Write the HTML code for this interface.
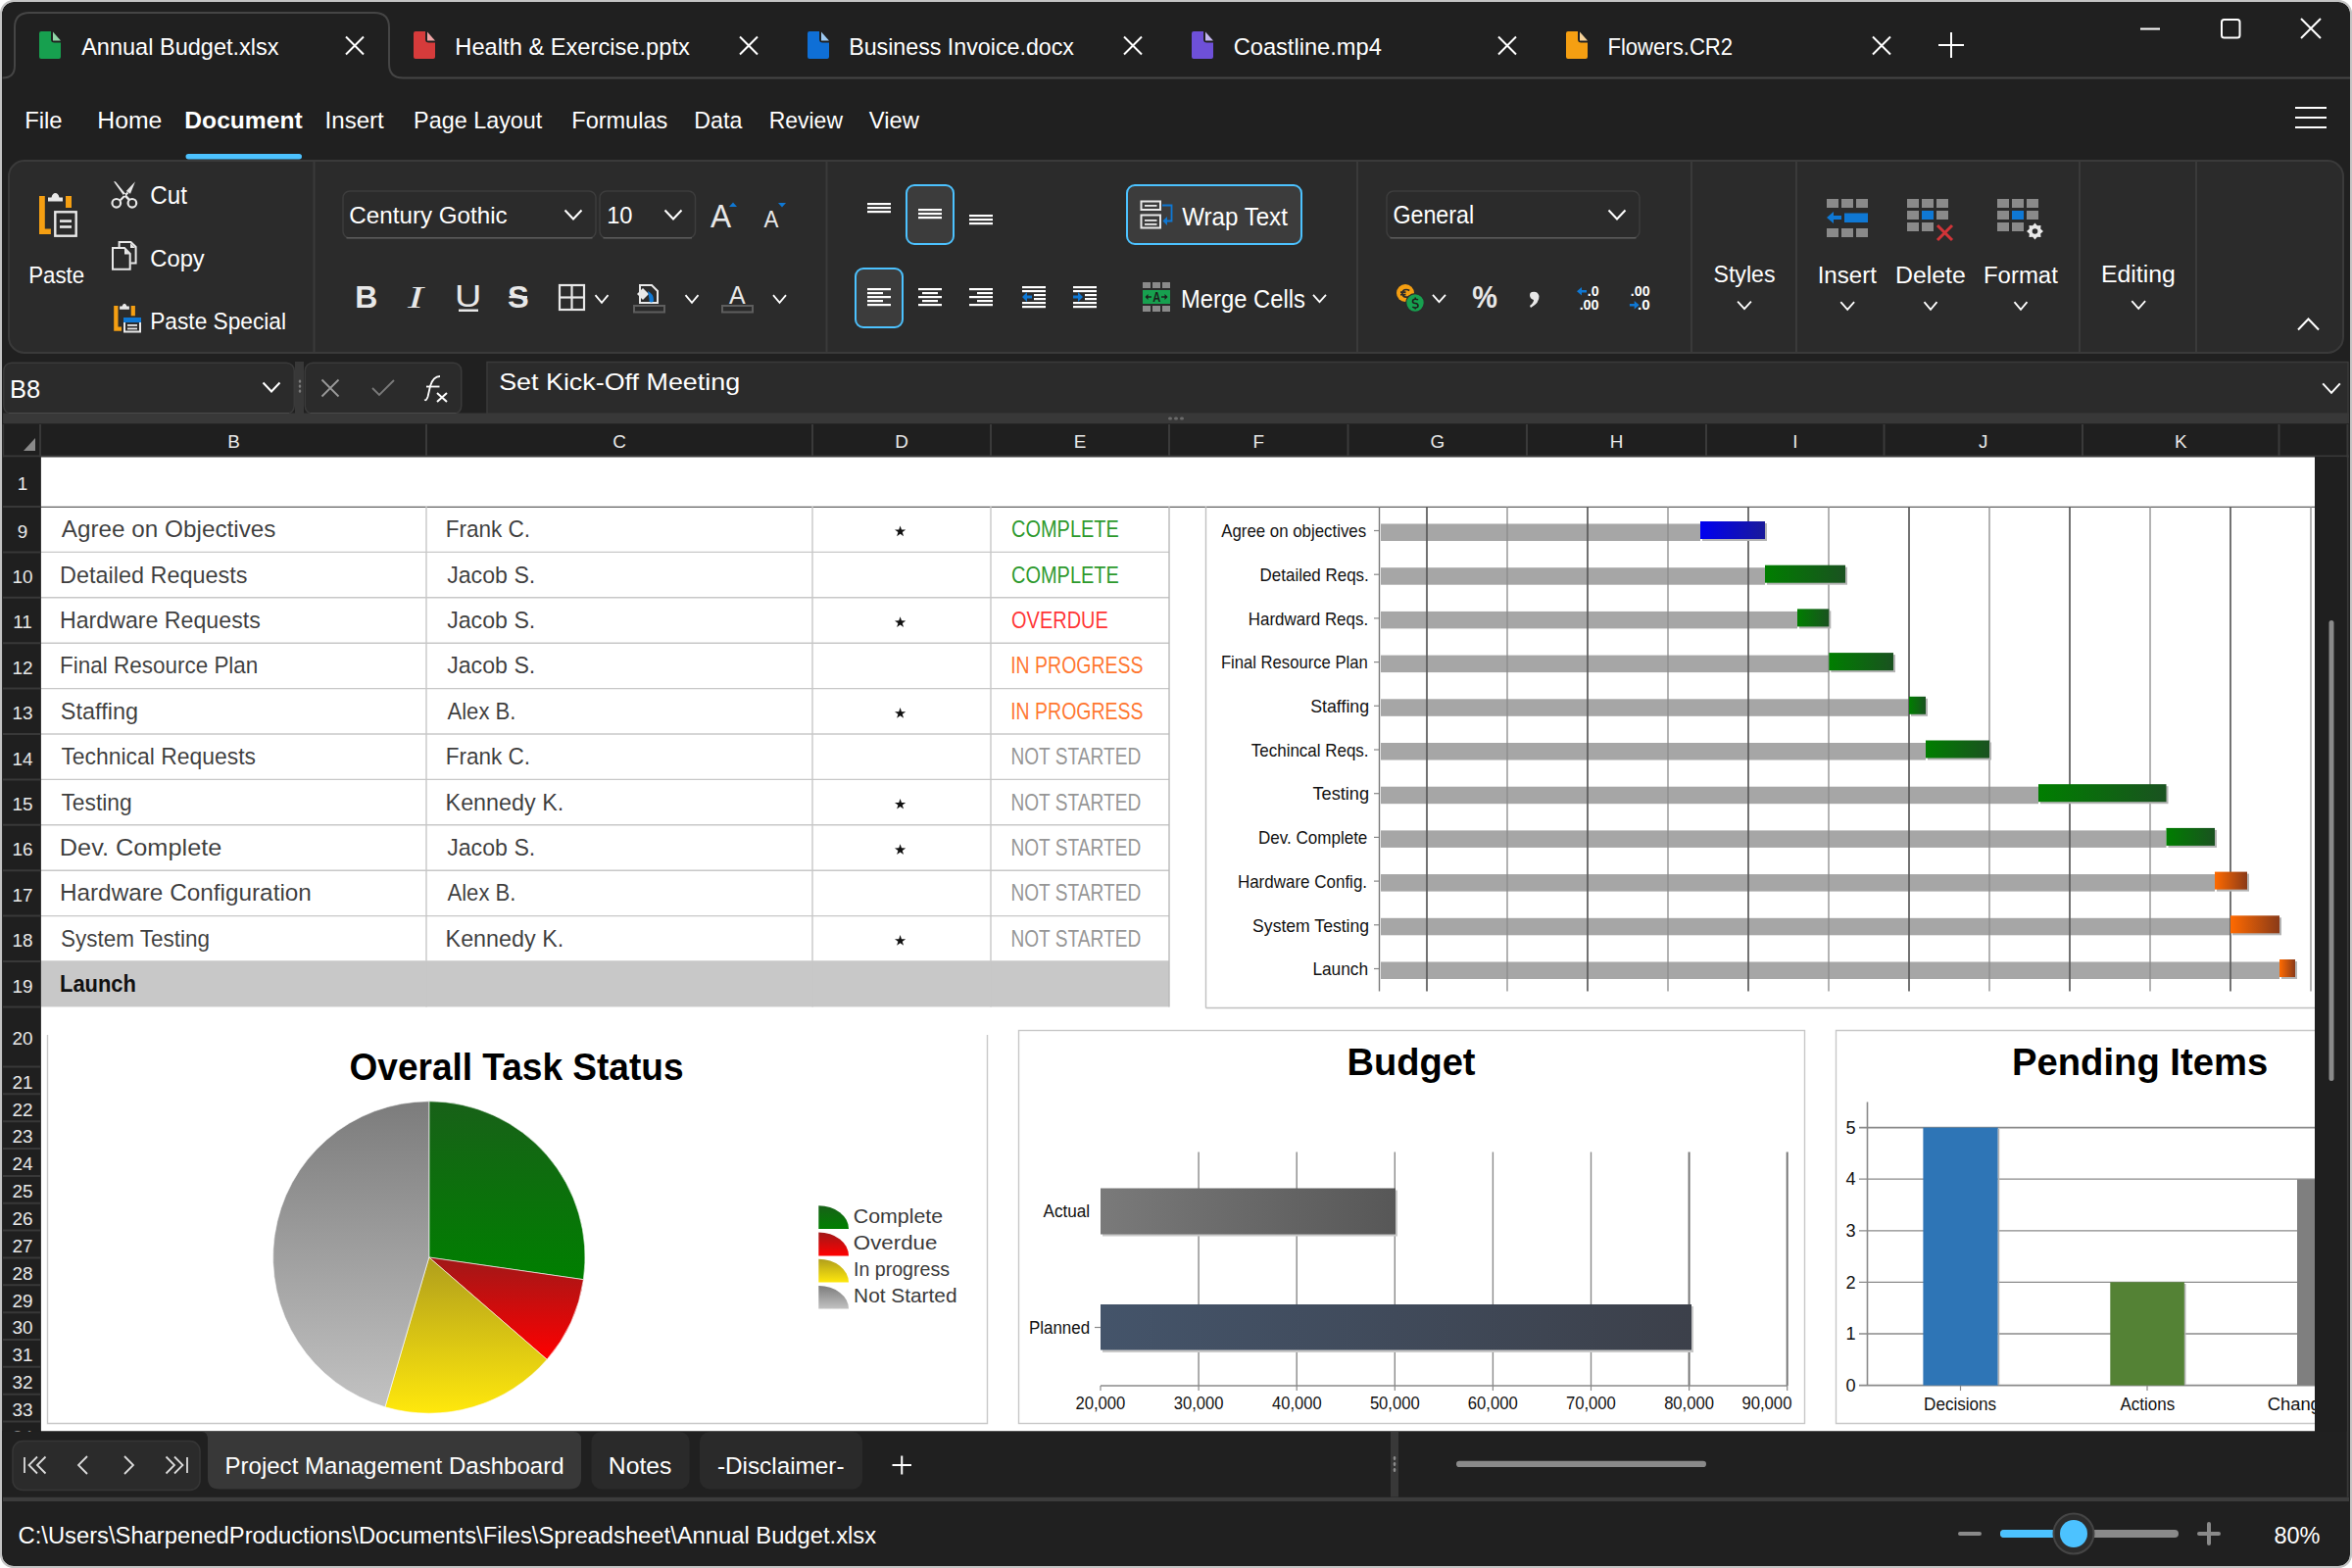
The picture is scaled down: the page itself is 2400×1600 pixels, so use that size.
<!DOCTYPE html>
<html><head><meta charset="utf-8"><style>
html,body{margin:0;padding:0;background:#fff;overflow:hidden}
svg{display:block;font-family:"Liberation Sans",sans-serif}
</style></head><body>
<svg width="2400" height="1600" viewBox="0 0 2400 1600">
<defs>
<linearGradient id="gblue" x1="0" x2="1" y1="0" y2="0"><stop offset="0" stop-color="#0000f0"/><stop offset="1" stop-color="#1a1a9a"/></linearGradient>
<linearGradient id="ggreen" x1="0" x2="1" y1="0" y2="0"><stop offset="0" stop-color="#007e00"/><stop offset="1" stop-color="#1a5220"/></linearGradient>
<linearGradient id="gorange" x1="0" x2="1" y1="0" y2="0"><stop offset="0" stop-color="#ff6a00"/><stop offset="1" stop-color="#8a3a18"/></linearGradient>
<linearGradient id="pg" x1="0" x2="0" y1="0" y2="1"><stop offset="0" stop-color="#186118"/><stop offset="1" stop-color="#007f00"/></linearGradient>
<linearGradient id="pr" x1="0" x2="0" y1="0" y2="1"><stop offset="0" stop-color="#a01818"/><stop offset="1" stop-color="#ff0000"/></linearGradient>
<linearGradient id="py" x1="0" x2="0" y1="0" y2="1"><stop offset="0" stop-color="#b09e1c"/><stop offset="1" stop-color="#ffe80c"/></linearGradient>
<linearGradient id="pgr" x1="0" x2="0" y1="0" y2="1"><stop offset="0" stop-color="#7c7c7c"/><stop offset="1" stop-color="#c2c2c2"/></linearGradient>
<linearGradient id="bact" x1="0" x2="1" y1="0" y2="0"><stop offset="0" stop-color="#7a7a7a"/><stop offset="1" stop-color="#575757"/></linearGradient>
<linearGradient id="bpl" x1="0" x2="1" y1="0" y2="0"><stop offset="0" stop-color="#44546a"/><stop offset="1" stop-color="#3c404a"/></linearGradient>
</defs>
<rect x="0.00" y="0.00" width="2400.00" height="1600.00" fill="#ffffff"/>
<rect x="1" y="1" width="2398" height="1598" rx="13" fill="#202020" stroke="#c4c4c4" stroke-width="2"/>
<path d="M2.5,79.5 Q15,79.5 15,67 L15,28 Q15,13 30,13 L382,13 Q397,13 397,28 L397,65 Q397,79.5 411,79.5 L2398,79.5" fill="none" stroke="#454545" stroke-width="2"/>
<path d="M42,32 L52,32 L52,40 Q52,43.5 55.5,43.5 L62,43.5 L62,58 Q62,60 60,60 L42,60 Q40,60 40,58 L40,34 Q40,32 42,32 Z" fill="#17a04f"/>
<path d="M54,32.5 L62,41.5 L54,41.5 Z" fill="#92d6a8"/>
<text x="83.15" y="55.8" font-size="24.71" fill="#fff" textLength="201.50" lengthAdjust="spacingAndGlyphs">Annual Budget.xlsx</text>
<path d="M353,37.5 L371,55.5 M371,37.5 L353,55.5" fill="none" stroke="#fff" stroke-width="2"/>
<path d="M424,32 L434,32 L434,40 Q434,43.5 437.5,43.5 L444,43.5 L444,58 Q444,60 442,60 L424,60 Q422,60 422,58 L422,34 Q422,32 424,32 Z" fill="#d63b3b"/>
<path d="M436,32.5 L444,41.5 L436,41.5 Z" fill="#eea4a4"/>
<text x="464.36" y="55.8" font-size="24.71" fill="#fff" textLength="239.50" lengthAdjust="spacingAndGlyphs">Health &amp; Exercise.pptx</text>
<path d="M755,37.5 L773,55.5 M773,37.5 L755,55.5" fill="none" stroke="#fff" stroke-width="2"/>
<path d="M826,32 L836,32 L836,40 Q836,43.5 839.5,43.5 L846,43.5 L846,58 Q846,60 844,60 L826,60 Q824,60 824,58 L824,34 Q824,32 826,32 Z" fill="#0f6fd6"/>
<path d="M838,32.5 L846,41.5 L838,41.5 Z" fill="#9dc8f0"/>
<text x="866.20" y="55.8" font-size="24.71" fill="#fff" textLength="229.75" lengthAdjust="spacingAndGlyphs">Business Invoice.docx</text>
<path d="M1147,37.5 L1165,55.5 M1165,37.5 L1147,55.5" fill="none" stroke="#fff" stroke-width="2"/>
<path d="M1218,32 L1228,32 L1228,40 Q1228,43.5 1231.5,43.5 L1238,43.5 L1238,58 Q1238,60 1236,60 L1218,60 Q1216,60 1216,58 L1216,34 Q1216,32 1218,32 Z" fill="#6e50d8"/>
<path d="M1230,32.5 L1238,41.5 L1230,41.5 Z" fill="#c3b6ee"/>
<text x="1258.70" y="55.8" font-size="24.71" fill="#fff" textLength="151.09" lengthAdjust="spacingAndGlyphs">Coastline.mp4</text>
<path d="M1529,37.5 L1547,55.5 M1547,37.5 L1529,55.5" fill="none" stroke="#fff" stroke-width="2"/>
<path d="M1600,32 L1610,32 L1610,40 Q1610,43.5 1613.5,43.5 L1620,43.5 L1620,58 Q1620,60 1618,60 L1600,60 Q1598,60 1598,58 L1598,34 Q1598,32 1600,32 Z" fill="#f59f12"/>
<path d="M1612,32.5 L1620,41.5 L1612,41.5 Z" fill="#f7d39a"/>
<text x="1640.39" y="55.8" font-size="24.71" fill="#fff" textLength="127.72" lengthAdjust="spacingAndGlyphs">Flowers.CR2</text>
<path d="M1911,37.5 L1929,55.5 M1929,37.5 L1911,55.5" fill="none" stroke="#fff" stroke-width="2"/>
<path d="M1978,46 L2004,46 M1991,33 L1991,59" fill="none" stroke="#fff" stroke-width="2"/>
<line x1="2184.00" y1="29.50" x2="2204.00" y2="29.50" stroke="#fff" stroke-width="2"/>
<rect x="2267.00" y="20.00" width="18.50" height="18.50" fill="none" rx="2.5" stroke="#fff" stroke-width="2"/>
<path d="M2348,19 L2368,39 M2368,19 L2348,39" fill="none" stroke="#fff" stroke-width="2"/>
<text x="25.14" y="131.2" font-size="24.71" fill="#fff" textLength="38.41" lengthAdjust="spacingAndGlyphs">File</text>
<text x="99.27" y="131.2" font-size="24.71" fill="#fff" textLength="66.03" lengthAdjust="spacingAndGlyphs">Home</text>
<text x="188.35" y="131.2" font-size="24.71" fill="#fff" font-weight="bold" textLength="120.25" lengthAdjust="spacingAndGlyphs">Document</text>
<text x="331.58" y="131.2" font-size="24.71" fill="#fff" textLength="60.20" lengthAdjust="spacingAndGlyphs">Insert</text>
<text x="422.08" y="131.2" font-size="24.71" fill="#fff" textLength="131.29" lengthAdjust="spacingAndGlyphs">Page Layout</text>
<text x="583.27" y="131.2" font-size="24.71" fill="#fff" textLength="97.98" lengthAdjust="spacingAndGlyphs">Formulas</text>
<text x="708.30" y="131.2" font-size="24.71" fill="#fff" textLength="49.00" lengthAdjust="spacingAndGlyphs">Data</text>
<text x="784.72" y="131.2" font-size="24.71" fill="#fff" textLength="75.23" lengthAdjust="spacingAndGlyphs">Review</text>
<text x="886.80" y="131.2" font-size="24.71" fill="#fff" textLength="51.15" lengthAdjust="spacingAndGlyphs">View</text>
<rect x="189.50" y="157.00" width="118.50" height="5.50" fill="#4cc2ff" rx="2.75"/>
<line x1="2342.00" y1="110.00" x2="2374.00" y2="110.00" stroke="#fff" stroke-width="2"/>
<line x1="2342.00" y1="120.00" x2="2374.00" y2="120.00" stroke="#fff" stroke-width="2"/>
<line x1="2342.00" y1="130.00" x2="2374.00" y2="130.00" stroke="#fff" stroke-width="2"/>
<rect x="9.00" y="164.00" width="2382.00" height="196.00" fill="#2b2b2b" rx="16" stroke="#3a3a3a" stroke-width="2"/>
<line x1="320.50" y1="165.00" x2="320.50" y2="359.00" stroke="#3a3a3a" stroke-width="2"/>
<line x1="843.50" y1="165.00" x2="843.50" y2="359.00" stroke="#3a3a3a" stroke-width="2"/>
<line x1="1385.00" y1="165.00" x2="1385.00" y2="359.00" stroke="#3a3a3a" stroke-width="2"/>
<line x1="1726.00" y1="165.00" x2="1726.00" y2="359.00" stroke="#3a3a3a" stroke-width="2"/>
<line x1="1833.00" y1="165.00" x2="1833.00" y2="359.00" stroke="#3a3a3a" stroke-width="2"/>
<line x1="2122.00" y1="165.00" x2="2122.00" y2="359.00" stroke="#3a3a3a" stroke-width="2"/>
<line x1="2241.00" y1="165.00" x2="2241.00" y2="359.00" stroke="#3a3a3a" stroke-width="2"/>
<path d="M40,200 L45.8,200 L45.8,233.6 L51.9,233.6 L51.9,239 L40,239 Z" fill="#f59f12"/>
<rect x="67.00" y="200.00" width="6.00" height="12.00" fill="#f59f12"/>
<path d="M49,205.6 L49,201.5 L52.5,201.5 Q53.5,197 56.5,197 Q59.5,197 60.5,201.5 L64,201.5 L64,205.6 Z" fill="#e8e8e8"/>
<rect x="56.30" y="216.30" width="21.40" height="24.40" fill="none" stroke="#e8e8e8" stroke-width="2.4"/>
<rect x="61.00" y="224.30" width="12.00" height="2.60" fill="#e8e8e8"/>
<rect x="61.00" y="230.20" width="12.00" height="2.60" fill="#e8e8e8"/>
<text x="29.17" y="289.0" font-size="24.27" fill="#ffffff" textLength="57.02" lengthAdjust="spacingAndGlyphs">Paste</text>
<path d="M116,185.2 L117.8,185.2 L129.5,199.5 L133,203.3 L131.3,205 L127,200.8 Z" fill="#e8e8e8"/>
<path d="M138,185.2 L133,197.8 L128.8,195 Z" fill="#e8e8e8"/>
<line x1="130.50" y1="196.50" x2="122.80" y2="204.20" stroke="#e8e8e8" stroke-width="2.2"/>
<circle cx="118.8" cy="207.3" r="4.3" fill="none" stroke="#e8e8e8" stroke-width="2.2"/>
<circle cx="134.9" cy="207.3" r="4.3" fill="none" stroke="#e8e8e8" stroke-width="2.2"/>
<circle cx="127" cy="199" r="1" fill="#2b2b2b"/>
<text x="153.27" y="208.3" font-size="25.15" fill="#ffffff" textLength="37.71" lengthAdjust="spacingAndGlyphs">Cut</text>
<path d="M121.6,252 L121.6,247 L133.5,247 L138.6,252 L138.6,268.5 L133.5,268.5" fill="none" stroke="#e8e8e8" stroke-width="2"/>
<path d="M133,248 L133,253 L138,253 Z" fill="#e8e8e8"/>
<path d="M115,253 L127,253 L132.7,259 L132.7,274.8 L115,274.8 Z" fill="none" stroke="#e8e8e8" stroke-width="2"/>
<path d="M127,254 L127,259.5 L132,259.5 Z" fill="#e8e8e8"/>
<text x="153.29" y="271.9" font-size="24.56" fill="#ffffff" textLength="55.45" lengthAdjust="spacingAndGlyphs">Copy</text>
<path d="M116.2,312 L120.5,312 L120.5,333.5 L124,333.5 L124,337.7 L116.2,337.7 Z" fill="#f59f12"/>
<rect x="133.70" y="312.00" width="4.20" height="10.30" fill="#f59f12"/>
<path d="M122.1,315.7 L122.1,312.5 L124.5,312.5 Q125.5,309.8 127,309.8 Q128.5,309.8 129.5,312.5 L131.9,312.5 L131.9,315.7 Z" fill="#e8e8e8"/>
<rect x="127.00" y="325.00" width="16.00" height="13.50" fill="none" stroke="#e8e8e8" stroke-width="2"/>
<rect x="126.00" y="324.00" width="18.00" height="5.00" fill="#0f78d4"/>
<rect x="130.00" y="331.00" width="10.00" height="1.80" fill="#e8e8e8"/>
<rect x="130.00" y="334.50" width="10.00" height="1.80" fill="#e8e8e8"/>
<text x="153.24" y="335.7" font-size="24.71" fill="#ffffff" textLength="138.78" lengthAdjust="spacingAndGlyphs">Paste Special</text>
<rect x="350.00" y="195.00" width="258.00" height="48.00" fill="#2b2b2b" rx="7" stroke="#3d3d3d" stroke-width="1.5"/>
<path d="M353.5,242.7 L604.5,242.7" fill="none" stroke="#5a5a5a" stroke-width="1.6"/>
<text x="356.37" y="228.0" font-size="24.71" fill="#ffffff" textLength="161.27" lengthAdjust="spacingAndGlyphs">Century Gothic</text>
<path d="M576.5,214.5 L585.0,223.5 L593.5,214.5" fill="none" stroke="#ffffff" stroke-width="2"/>
<rect x="612.00" y="195.00" width="97.50" height="48.00" fill="#2b2b2b" rx="7" stroke="#3d3d3d" stroke-width="1.5"/>
<path d="M615.5,242.7 L706,242.7" fill="none" stroke="#5a5a5a" stroke-width="1.6"/>
<text x="619.20" y="228.0" font-size="24.71" fill="#ffffff" textLength="26.33" lengthAdjust="spacingAndGlyphs">10</text>
<path d="M678.5,214.5 L687.0,223.5 L695.5,214.5" fill="none" stroke="#ffffff" stroke-width="2"/>
<text x="724.94" y="231.6" font-size="33.43" fill="#e8e8e8" textLength="21.12" lengthAdjust="spacingAndGlyphs">A</text>
<path d="M744,211 L748,206.5 L752,211 Z" fill="#0f78d4"/>
<text x="779.46" y="231.6" font-size="24.56" fill="#e8e8e8" textLength="14.89" lengthAdjust="spacingAndGlyphs">A</text>
<path d="M794,207 L802,207 L798,211.5 Z" fill="#0f78d4"/>
<text x="362.36" y="314.0" font-size="31.98" fill="#e8e8e8" font-weight="bold" textLength="23.09" lengthAdjust="spacingAndGlyphs">B</text>
<text x="416" y="314" font-size="31" fill="#e8e8e8" font-family="Liberation Serif" font-style="italic" textLength="16" lengthAdjust="spacingAndGlyphs">I</text>
<text x="464.08" y="313.0" font-size="30.52" fill="#e8e8e8" textLength="27.34" lengthAdjust="spacingAndGlyphs">U</text>
<rect x="468.00" y="315.50" width="20.00" height="2.50" fill="#e8e8e8"/>
<text x="518.06" y="314.0" font-size="31.98" fill="#e8e8e8" font-weight="bold" textLength="21.71" lengthAdjust="spacingAndGlyphs">S</text>
<rect x="519.50" y="302.00" width="18.50" height="2.20" fill="#e8e8e8"/>
<rect x="571.00" y="291.00" width="25.00" height="25.00" fill="none" stroke="#e8e8e8" stroke-width="2.2"/>
<line x1="583.50" y1="291.00" x2="583.50" y2="316.00" stroke="#e8e8e8" stroke-width="2.2"/>
<line x1="571.00" y1="303.50" x2="596.00" y2="303.50" stroke="#e8e8e8" stroke-width="2.2"/>
<path d="M607.5,301.2 L614.0,308.8 L620.5,301.2" fill="none" stroke="#ffffff" stroke-width="1.8"/>
<path d="M653,291 L665,291 L671,297 L671,309 L653,309 Z" fill="none" stroke="#e8e8e8" stroke-width="2"/>
<path d="M650,300 L656,294 L662,300 L656,306 Z" fill="#e8e8e8"/>
<path d="M661,297 Q667,300 667,306 Q667,308.5 664.5,308.5 Q662,308.5 662.5,305 Z" fill="#0f78d4"/>
<rect x="647.00" y="312.00" width="31.00" height="6.50" fill="none" stroke="#5e5e5e" stroke-width="2"/>
<path d="M699.5,301.2 L706.0,308.8 L712.5,301.2" fill="none" stroke="#ffffff" stroke-width="1.8"/>
<text x="743.95" y="310.0" font-size="25.44" fill="#e8e8e8" textLength="16.60" lengthAdjust="spacingAndGlyphs">A</text>
<rect x="737.00" y="312.00" width="31.00" height="6.50" fill="none" stroke="#5e5e5e" stroke-width="2"/>
<path d="M789.0,301.2 L795.5,308.8 L802.0,301.2" fill="none" stroke="#ffffff" stroke-width="1.8"/>
<rect x="925.00" y="189.00" width="48.00" height="60.00" fill="#3c3c3c" rx="8" stroke="#4cc2ff" stroke-width="2"/>
<rect x="873.00" y="274.00" width="48.00" height="60.00" fill="#3c3c3c" rx="8" stroke="#4cc2ff" stroke-width="2"/>
<rect x="885.00" y="207.00" width="24.00" height="2.20" fill="#ffffff"/>
<rect x="885.00" y="211.00" width="24.00" height="2.20" fill="#ffffff"/>
<rect x="885.00" y="215.00" width="24.00" height="2.20" fill="#ffffff"/>
<rect x="937.00" y="213.00" width="24.00" height="2.20" fill="#ffffff"/>
<rect x="937.00" y="217.00" width="24.00" height="2.20" fill="#ffffff"/>
<rect x="937.00" y="221.00" width="24.00" height="2.20" fill="#ffffff"/>
<rect x="989.00" y="219.00" width="24.00" height="2.20" fill="#ffffff"/>
<rect x="989.00" y="223.00" width="24.00" height="2.20" fill="#ffffff"/>
<rect x="989.00" y="227.00" width="24.00" height="2.20" fill="#ffffff"/>
<rect x="885.00" y="294.00" width="24.00" height="2.20" fill="#ffffff"/>
<rect x="885.00" y="298.00" width="16.00" height="2.20" fill="#ffffff"/>
<rect x="885.00" y="302.00" width="24.00" height="2.20" fill="#ffffff"/>
<rect x="885.00" y="306.00" width="16.00" height="2.20" fill="#ffffff"/>
<rect x="885.00" y="310.00" width="24.00" height="2.20" fill="#ffffff"/>
<rect x="937.00" y="294.00" width="24.00" height="2.20" fill="#ffffff"/>
<rect x="941.00" y="298.00" width="16.00" height="2.20" fill="#ffffff"/>
<rect x="937.00" y="302.00" width="24.00" height="2.20" fill="#ffffff"/>
<rect x="941.00" y="306.00" width="16.00" height="2.20" fill="#ffffff"/>
<rect x="937.00" y="310.00" width="24.00" height="2.20" fill="#ffffff"/>
<rect x="989.00" y="294.00" width="24.00" height="2.20" fill="#ffffff"/>
<rect x="997.00" y="298.00" width="16.00" height="2.20" fill="#ffffff"/>
<rect x="989.00" y="302.00" width="24.00" height="2.20" fill="#ffffff"/>
<rect x="997.00" y="306.00" width="16.00" height="2.20" fill="#ffffff"/>
<rect x="989.00" y="310.00" width="24.00" height="2.20" fill="#ffffff"/>
<rect x="1043.00" y="292.00" width="24.00" height="2.20" fill="#ffffff"/>
<rect x="1043.00" y="296.00" width="24.00" height="2.20" fill="#ffffff"/>
<rect x="1055.00" y="300.00" width="12.00" height="2.20" fill="#ffffff"/>
<rect x="1055.00" y="304.00" width="12.00" height="2.20" fill="#ffffff"/>
<rect x="1043.00" y="308.00" width="24.00" height="2.20" fill="#ffffff"/>
<rect x="1043.00" y="312.00" width="24.00" height="2.20" fill="#ffffff"/>
<path d="M1043,303 L1048,298 L1048,301.5 L1053,301.5 L1053,304.5 L1048,304.5 L1048,308 Z" fill="#0f78d4"/>
<rect x="1095.00" y="292.00" width="24.00" height="2.20" fill="#ffffff"/>
<rect x="1095.00" y="296.00" width="24.00" height="2.20" fill="#ffffff"/>
<rect x="1107.00" y="300.00" width="12.00" height="2.20" fill="#ffffff"/>
<rect x="1107.00" y="304.00" width="12.00" height="2.20" fill="#ffffff"/>
<rect x="1095.00" y="308.00" width="24.00" height="2.20" fill="#ffffff"/>
<rect x="1095.00" y="312.00" width="24.00" height="2.20" fill="#ffffff"/>
<path d="M1105,303 L1100,298 L1100,301.5 L1095,301.5 L1095,304.5 L1100,304.5 L1100,308 Z" fill="#0f78d4"/>
<rect x="1150.00" y="189.00" width="178.00" height="60.00" fill="#3c3c3c" rx="8" stroke="#4cc2ff" stroke-width="2"/>
<rect x="1164.50" y="205.50" width="19.50" height="8.50" fill="none" stroke="#e8e8e8" stroke-width="2"/>
<rect x="1168.00" y="209.00" width="12.50" height="1.80" fill="#e8e8e8"/>
<rect x="1164.50" y="219.50" width="19.50" height="13.00" fill="none" stroke="#e8e8e8" stroke-width="2"/>
<rect x="1168.00" y="224.00" width="12.50" height="1.80" fill="#e8e8e8"/>
<rect x="1168.00" y="228.00" width="12.50" height="1.80" fill="#e8e8e8"/>
<path d="M1186,209.5 L1195.5,209.5 L1195.5,225.5 L1190,225.5" fill="none" stroke="#0f78d4" stroke-width="1.8"/>
<path d="M1186.5,225.5 L1191,221 L1191,230 Z" fill="#0f78d4"/>
<text x="1206.20" y="229.5" font-size="25.44" fill="#ffffff" textLength="107.67" lengthAdjust="spacingAndGlyphs">Wrap Text</text>
<rect x="1166.00" y="288.00" width="8.00" height="6.00" fill="#8a8a8a"/>
<rect x="1166.00" y="312.00" width="8.00" height="6.00" fill="#8a8a8a"/>
<rect x="1176.00" y="288.00" width="8.00" height="6.00" fill="#8a8a8a"/>
<rect x="1176.00" y="312.00" width="8.00" height="6.00" fill="#8a8a8a"/>
<rect x="1186.00" y="288.00" width="8.00" height="6.00" fill="#8a8a8a"/>
<rect x="1186.00" y="312.00" width="8.00" height="6.00" fill="#8a8a8a"/>
<rect x="1166.00" y="296.00" width="28.00" height="14.00" fill="#17a04f"/>
<text x="1176.32" y="307.5" font-size="13.81" fill="#1c1c1c" font-weight="bold" textLength="8.07" lengthAdjust="spacingAndGlyphs">A</text>
<path d="M1168.5,303 L1171.5,300 L1171.5,306 Z" fill="#1c1c1c"/>
<path d="M1191.5,303 L1188.5,300 L1188.5,306 Z" fill="#1c1c1c"/>
<rect x="1171.00" y="302.30" width="4.00" height="1.40" fill="#1c1c1c"/>
<rect x="1185.00" y="302.30" width="4.00" height="1.40" fill="#1c1c1c"/>
<text x="1205.05" y="314.0" font-size="25.44" fill="#ffffff" textLength="126.81" lengthAdjust="spacingAndGlyphs">Merge Cells</text>
<path d="M1340.0,300.8 L1346.5,308.2 L1353.0,300.8" fill="none" stroke="#ffffff" stroke-width="1.8"/>
<rect x="1415.00" y="195.00" width="258.00" height="48.00" fill="#2b2b2b" rx="7" stroke="#3d3d3d" stroke-width="1.5"/>
<path d="M1418.5,242.7 L1669.5,242.7" fill="none" stroke="#5a5a5a" stroke-width="1.6"/>
<text x="1421.43" y="228.0" font-size="25.00" fill="#ffffff" textLength="82.72" lengthAdjust="spacingAndGlyphs">General</text>
<path d="M1641.5,214.5 L1650.0,223.5 L1658.5,214.5" fill="none" stroke="#ffffff" stroke-width="2"/>
<circle cx="1434" cy="299" r="9" fill="#f59f12"/>
<path d="M1438.2,296.5 Q1436.8,295.5 1435,295.5 Q1431,295.5 1431,299.3 Q1431,303.2 1435,303.2 Q1436.8,303.2 1438.2,302.2 M1429,298.2 L1434.5,298.2 M1429,300.6 L1434.5,300.6" fill="none" stroke="#2b2b2b" stroke-width="1.7"/>
<circle cx="1444" cy="309" r="9.3" fill="#17a04f" stroke="#2b2b2b" stroke-width="1.2"/>
<path d="M1447,306 Q1446,305.2 1444.2,305.2 Q1441.5,305.2 1441.5,307.4 Q1441.5,309.3 1444.2,309.5 Q1447,309.8 1447,312 Q1447,314 1444.2,314 Q1442.4,314 1441.3,313 M1444.2,303.6 L1444.2,305.2 M1444.2,314 L1444.2,315.6" fill="none" stroke="#1e1e1e" stroke-width="1.6"/>
<path d="M1462.0,300.8 L1468.5,308.2 L1475.0,300.8" fill="none" stroke="#ffffff" stroke-width="1.8"/>
<text x="1502.18" y="313.9" font-size="31.25" fill="#e8e8e8" font-weight="bold" textLength="25.68" lengthAdjust="spacingAndGlyphs">%</text>
<path d="M1563,298 Q1569,296.5 1570.5,302 Q1571,309 1562,314 L1561,312 Q1565,309 1565,306 Q1561,305 1561,301 Q1561,298.5 1563,298 Z" fill="#e8e8e8"/>
<text x="1619.74" y="302.0" font-size="14.54" fill="#fff" font-weight="bold" textLength="11.85" lengthAdjust="spacingAndGlyphs">.0</text>
<text x="1611.63" y="315.7" font-size="14.54" fill="#fff" font-weight="bold" textLength="19.96" lengthAdjust="spacingAndGlyphs">.00</text>
<path d="M1609,297.3 L1614,293 L1614,296 L1619,296 L1619,298.6 L1614,298.6 L1614,301.6 Z" fill="#0f78d4"/>
<text x="1663.84" y="302.0" font-size="14.54" fill="#fff" font-weight="bold" textLength="19.75" lengthAdjust="spacingAndGlyphs">.00</text>
<text x="1670.97" y="315.7" font-size="14.54" fill="#fff" font-weight="bold" textLength="12.65" lengthAdjust="spacingAndGlyphs">.0</text>
<path d="M1672.7,311.2 L1667.7,306.9 L1667.7,309.9 L1662.9,309.9 L1662.9,312.5 L1667.7,312.5 L1667.7,315.5 Z" fill="#0f78d4"/>
<text x="1748.55" y="288.0" font-size="23.84" fill="#ffffff" textLength="62.88" lengthAdjust="spacingAndGlyphs">Styles</text>
<path d="M1773.1,307.6 L1780.0,315.1 L1786.9,307.6" fill="none" stroke="#ffffff" stroke-width="1.8"/>
<rect x="1864.00" y="203.00" width="12.00" height="9.00" fill="#8a8a8a"/>
<rect x="1864.00" y="233.00" width="12.00" height="9.00" fill="#8a8a8a"/>
<rect x="1879.00" y="203.00" width="12.00" height="9.00" fill="#8a8a8a"/>
<rect x="1879.00" y="233.00" width="12.00" height="9.00" fill="#8a8a8a"/>
<rect x="1894.00" y="203.00" width="12.00" height="9.00" fill="#8a8a8a"/>
<rect x="1894.00" y="233.00" width="12.00" height="9.00" fill="#8a8a8a"/>
<rect x="1882.00" y="217.50" width="24.00" height="9.50" fill="#0f78d4"/>
<path d="M1864,222 L1871,216 L1871,220 L1879,220 L1879,224 L1871,224 L1871,228 Z" fill="#0f78d4"/>
<text x="1854.68" y="288.5" font-size="23.98" fill="#ffffff" textLength="60.20" lengthAdjust="spacingAndGlyphs">Insert</text>
<path d="M1878.3,308.2 L1885.2,315.8 L1892.1,308.2" fill="none" stroke="#ffffff" stroke-width="1.8"/>
<rect x="1946.00" y="203.00" width="12.00" height="9.00" fill="#8a8a8a"/>
<rect x="1961.00" y="203.00" width="12.00" height="9.00" fill="#8a8a8a"/>
<rect x="1976.00" y="203.00" width="12.00" height="9.00" fill="#8a8a8a"/>
<rect x="1946.00" y="215.00" width="12.00" height="9.00" fill="#8a8a8a"/>
<rect x="1961.00" y="215.00" width="12.00" height="9.00" fill="#0f78d4"/>
<rect x="1976.00" y="215.00" width="12.00" height="9.00" fill="#8a8a8a"/>
<rect x="1946.00" y="227.00" width="12.00" height="9.00" fill="#8a8a8a"/>
<rect x="1961.00" y="227.00" width="12.00" height="9.00" fill="#8a8a8a"/>
<path d="M1977,230 L1992,245 M1992,230 L1977,245" fill="none" stroke="#d13438" stroke-width="3"/>
<text x="1933.96" y="288.5" font-size="23.98" fill="#ffffff" textLength="71.84" lengthAdjust="spacingAndGlyphs">Delete</text>
<path d="M1963.5,308.2 L1970.0,315.8 L1976.5,308.2" fill="none" stroke="#ffffff" stroke-width="1.8"/>
<rect x="2038.00" y="203.00" width="12.00" height="9.00" fill="#8a8a8a"/>
<rect x="2053.00" y="203.00" width="12.00" height="9.00" fill="#8a8a8a"/>
<rect x="2068.00" y="203.00" width="12.00" height="9.00" fill="#8a8a8a"/>
<rect x="2038.00" y="215.00" width="12.00" height="9.00" fill="#8a8a8a"/>
<rect x="2053.00" y="215.00" width="12.00" height="9.00" fill="#0f78d4"/>
<rect x="2068.00" y="215.00" width="12.00" height="9.00" fill="#8a8a8a"/>
<rect x="2038.00" y="227.00" width="12.00" height="9.00" fill="#8a8a8a"/>
<rect x="2053.00" y="227.00" width="12.00" height="9.00" fill="#8a8a8a"/>
<polygon points="2085.0,236.0 2082.2,238.4 2082.5,242.0 2078.9,241.7 2076.5,244.5 2074.1,241.7 2070.5,242.0 2070.8,238.4 2068.0,236.0 2070.8,233.6 2070.5,230.0 2074.1,230.3 2076.5,227.5 2078.9,230.3 2082.5,230.0 2082.2,233.6" fill="#e8e8e8"/>
<circle cx="2076.5" cy="236" r="2.8" fill="#2b2b2b"/>
<text x="2023.93" y="288.5" font-size="23.98" fill="#ffffff" textLength="75.94" lengthAdjust="spacingAndGlyphs">Format</text>
<path d="M2055.5,308.2 L2062.0,315.8 L2068.5,308.2" fill="none" stroke="#ffffff" stroke-width="1.8"/>
<text x="2143.96" y="288.0" font-size="23.98" fill="#ffffff" textLength="75.94" lengthAdjust="spacingAndGlyphs">Editing</text>
<path d="M2175.3,307.2 L2182.2,314.8 L2189.1,307.2" fill="none" stroke="#ffffff" stroke-width="1.8"/>
<path d="M2345.0,336.5 L2355.5,325.5 L2366.0,336.5" fill="none" stroke="#ffffff" stroke-width="2"/>
<rect x="3.75" y="370.25" width="296.50" height="52.00" fill="#2b2b2b" rx="8" stroke="#3a3a3a" stroke-width="1.5"/>
<path d="M9,422 L295,422" fill="none" stroke="#5a5a5a" stroke-width="2"/>
<text x="9.91" y="406.0" font-size="25.73" fill="#ffffff" textLength="31.20" lengthAdjust="spacingAndGlyphs">B8</text>
<path d="M268.5,390.5 L277.0,399.5 L285.5,390.5" fill="none" stroke="#ffffff" stroke-width="2"/>
<rect x="301.00" y="369.00" width="9.00" height="54.00" fill="#383838"/>
<rect x="304.8" y="387.5" width="2.4" height="3.2" rx="1.2" fill="#7a7a7a"/>
<rect x="304.8" y="392.5" width="2.4" height="3.2" rx="1.2" fill="#7a7a7a"/>
<rect x="304.8" y="397.5" width="2.4" height="3.2" rx="1.2" fill="#7a7a7a"/>
<rect x="311.25" y="370.25" width="159.50" height="52.00" fill="#2b2b2b" rx="8" stroke="#3a3a3a" stroke-width="1.5"/>
<path d="M316.5,422 L465.5,422" fill="none" stroke="#5a5a5a" stroke-width="2"/>
<path d="M328.5,387.5 L345.5,404.5 M345.5,387.5 L328.5,404.5" fill="none" stroke="#9a9a9a" stroke-width="1.8"/>
<path d="M380,396 L387,403 L402,388" fill="none" stroke="#7a7a7a" stroke-width="1.8"/>
<path d="M449,384 Q442,384 439,394 L436.5,405 Q434.5,410 433.5,407.5" fill="none" stroke="#ffffff" stroke-width="1.8"/>
<path d="M435,394.5 L448.5,394.5" fill="none" stroke="#ffffff" stroke-width="1.8"/>
<path d="M446,401 L456,410 M456,401 L446,410" fill="none" stroke="#ffffff" stroke-width="2"/>
<rect x="497.00" y="369.50" width="1899.00" height="53.00" fill="#2b2b2b" stroke="#3a3a3a" stroke-width="1.5"/>
<text x="509.18" y="398.3" font-size="24.13" fill="#ffffff" textLength="245.95" lengthAdjust="spacingAndGlyphs">Set Kick-Off Meeting</text>
<path d="M2370.2,391.4 L2379.0,400.9 L2387.8,391.4" fill="none" stroke="#ffffff" stroke-width="2"/>
<rect x="3.00" y="421.50" width="2394.00" height="11.00" fill="#383838"/>
<rect x="1192" y="425.5" width="4" height="3" rx="1.5" fill="#6a6a6a"/>
<rect x="1198" y="425.5" width="4" height="3" rx="1.5" fill="#6a6a6a"/>
<rect x="1204" y="425.5" width="4" height="3" rx="1.5" fill="#6a6a6a"/>
<rect x="3.00" y="432.50" width="2394.00" height="33.00" fill="#1f1f1f"/>
<line x1="2395.50" y1="433.00" x2="2395.50" y2="1527.50" stroke="#383838" stroke-width="2"/>
<line x1="3.00" y1="465.50" x2="2397.00" y2="465.50" stroke="#383838" stroke-width="2"/>
<line x1="41.00" y1="433.00" x2="41.00" y2="1460.00" stroke="#383838" stroke-width="2"/>
<line x1="3.40" y1="433.00" x2="3.40" y2="1460.00" stroke="#383838" stroke-width="1.6"/>
<line x1="435.00" y1="433.00" x2="435.00" y2="465.00" stroke="#3a3a3a" stroke-width="2"/>
<line x1="829.00" y1="433.00" x2="829.00" y2="465.00" stroke="#3a3a3a" stroke-width="2"/>
<line x1="1011.00" y1="433.00" x2="1011.00" y2="465.00" stroke="#3a3a3a" stroke-width="2"/>
<line x1="1193.00" y1="433.00" x2="1193.00" y2="465.00" stroke="#3a3a3a" stroke-width="2"/>
<line x1="1375.50" y1="433.00" x2="1375.50" y2="465.00" stroke="#3a3a3a" stroke-width="2"/>
<line x1="1558.00" y1="433.00" x2="1558.00" y2="465.00" stroke="#3a3a3a" stroke-width="2"/>
<line x1="1741.00" y1="433.00" x2="1741.00" y2="465.00" stroke="#3a3a3a" stroke-width="2"/>
<line x1="1922.50" y1="433.00" x2="1922.50" y2="465.00" stroke="#3a3a3a" stroke-width="2"/>
<line x1="2125.00" y1="433.00" x2="2125.00" y2="465.00" stroke="#3a3a3a" stroke-width="2"/>
<line x1="2325.50" y1="433.00" x2="2325.50" y2="465.00" stroke="#3a3a3a" stroke-width="2"/>
<text x="238.5" y="457.0" font-size="18.90" fill="#e8e8e8" text-anchor="middle">B</text>
<text x="632.0" y="457.0" font-size="18.90" fill="#e8e8e8" text-anchor="middle">C</text>
<text x="920.0" y="457.0" font-size="18.90" fill="#e8e8e8" text-anchor="middle">D</text>
<text x="1102.0" y="457.0" font-size="18.90" fill="#e8e8e8" text-anchor="middle">E</text>
<text x="1284.2" y="457.0" font-size="18.90" fill="#e8e8e8" text-anchor="middle">F</text>
<text x="1466.8" y="457.0" font-size="18.90" fill="#e8e8e8" text-anchor="middle">G</text>
<text x="1649.5" y="457.0" font-size="18.90" fill="#e8e8e8" text-anchor="middle">H</text>
<text x="1831.8" y="457.0" font-size="18.90" fill="#e8e8e8" text-anchor="middle">I</text>
<text x="2023.8" y="457.0" font-size="18.90" fill="#e8e8e8" text-anchor="middle">J</text>
<text x="2225.2" y="457.0" font-size="18.90" fill="#e8e8e8" text-anchor="middle">K</text>
<path d="M24,460 L36,460 L36,447 Z" fill="#8a8a8a"/>
<rect x="42.00" y="466.50" width="2320.00" height="994.00" fill="#ffffff"/>
<rect x="2362.00" y="466.50" width="32.50" height="994.00" fill="#1f1f1f"/>
<rect x="2376.50" y="633.00" width="5.00" height="470.00" fill="#8a8a8a" rx="2.5"/>
<rect x="3.00" y="466.50" width="38.00" height="994.00" fill="#1f1f1f"/>
<line x1="3.00" y1="517.00" x2="41.00" y2="517.00" stroke="#383838" stroke-width="2"/>
<text x="23.0" y="500.1" font-size="18.90" fill="#e8e8e8" text-anchor="middle">1</text>
<line x1="3.00" y1="563.40" x2="41.00" y2="563.40" stroke="#383838" stroke-width="2"/>
<text x="23.0" y="548.5" font-size="18.90" fill="#e8e8e8" text-anchor="middle">9</text>
<line x1="3.00" y1="609.80" x2="41.00" y2="609.80" stroke="#383838" stroke-width="2"/>
<text x="23.0" y="594.9" font-size="18.90" fill="#e8e8e8" text-anchor="middle">10</text>
<line x1="3.00" y1="656.20" x2="41.00" y2="656.20" stroke="#383838" stroke-width="2"/>
<text x="23.0" y="641.3" font-size="18.90" fill="#e8e8e8" text-anchor="middle">11</text>
<line x1="3.00" y1="702.60" x2="41.00" y2="702.60" stroke="#383838" stroke-width="2"/>
<text x="23.0" y="687.7" font-size="18.90" fill="#e8e8e8" text-anchor="middle">12</text>
<line x1="3.00" y1="749.00" x2="41.00" y2="749.00" stroke="#383838" stroke-width="2"/>
<text x="23.0" y="734.1" font-size="18.90" fill="#e8e8e8" text-anchor="middle">13</text>
<line x1="3.00" y1="795.40" x2="41.00" y2="795.40" stroke="#383838" stroke-width="2"/>
<text x="23.0" y="780.5" font-size="18.90" fill="#e8e8e8" text-anchor="middle">14</text>
<line x1="3.00" y1="841.80" x2="41.00" y2="841.80" stroke="#383838" stroke-width="2"/>
<text x="23.0" y="826.9" font-size="18.90" fill="#e8e8e8" text-anchor="middle">15</text>
<line x1="3.00" y1="888.20" x2="41.00" y2="888.20" stroke="#383838" stroke-width="2"/>
<text x="23.0" y="873.3" font-size="18.90" fill="#e8e8e8" text-anchor="middle">16</text>
<line x1="3.00" y1="934.60" x2="41.00" y2="934.60" stroke="#383838" stroke-width="2"/>
<text x="23.0" y="919.7" font-size="18.90" fill="#e8e8e8" text-anchor="middle">17</text>
<line x1="3.00" y1="981.00" x2="41.00" y2="981.00" stroke="#383838" stroke-width="2"/>
<text x="23.0" y="966.1" font-size="18.90" fill="#e8e8e8" text-anchor="middle">18</text>
<line x1="3.00" y1="1027.40" x2="41.00" y2="1027.40" stroke="#383838" stroke-width="2"/>
<text x="23.0" y="1012.5" font-size="18.90" fill="#e8e8e8" text-anchor="middle">19</text>
<line x1="3.00" y1="1088.50" x2="41.00" y2="1088.50" stroke="#383838" stroke-width="2"/>
<text x="23.0" y="1066.2" font-size="18.90" fill="#e8e8e8" text-anchor="middle">20</text>
<line x1="3.00" y1="1116.35" x2="41.00" y2="1116.35" stroke="#383838" stroke-width="2"/>
<text x="23.0" y="1110.7" font-size="18.90" fill="#e8e8e8" text-anchor="middle">21</text>
<line x1="3.00" y1="1144.20" x2="41.00" y2="1144.20" stroke="#383838" stroke-width="2"/>
<text x="23.0" y="1138.6" font-size="18.90" fill="#e8e8e8" text-anchor="middle">22</text>
<line x1="3.00" y1="1172.05" x2="41.00" y2="1172.05" stroke="#383838" stroke-width="2"/>
<text x="23.0" y="1166.4" font-size="18.90" fill="#e8e8e8" text-anchor="middle">23</text>
<line x1="3.00" y1="1199.90" x2="41.00" y2="1199.90" stroke="#383838" stroke-width="2"/>
<text x="23.0" y="1194.3" font-size="18.90" fill="#e8e8e8" text-anchor="middle">24</text>
<line x1="3.00" y1="1227.75" x2="41.00" y2="1227.75" stroke="#383838" stroke-width="2"/>
<text x="23.0" y="1222.1" font-size="18.90" fill="#e8e8e8" text-anchor="middle">25</text>
<line x1="3.00" y1="1255.60" x2="41.00" y2="1255.60" stroke="#383838" stroke-width="2"/>
<text x="23.0" y="1250.0" font-size="18.90" fill="#e8e8e8" text-anchor="middle">26</text>
<line x1="3.00" y1="1283.45" x2="41.00" y2="1283.45" stroke="#383838" stroke-width="2"/>
<text x="23.0" y="1277.8" font-size="18.90" fill="#e8e8e8" text-anchor="middle">27</text>
<line x1="3.00" y1="1311.30" x2="41.00" y2="1311.30" stroke="#383838" stroke-width="2"/>
<text x="23.0" y="1305.7" font-size="18.90" fill="#e8e8e8" text-anchor="middle">28</text>
<line x1="3.00" y1="1339.15" x2="41.00" y2="1339.15" stroke="#383838" stroke-width="2"/>
<text x="23.0" y="1333.5" font-size="18.90" fill="#e8e8e8" text-anchor="middle">29</text>
<line x1="3.00" y1="1367.00" x2="41.00" y2="1367.00" stroke="#383838" stroke-width="2"/>
<text x="23.0" y="1361.4" font-size="18.90" fill="#e8e8e8" text-anchor="middle">30</text>
<line x1="3.00" y1="1394.85" x2="41.00" y2="1394.85" stroke="#383838" stroke-width="2"/>
<text x="23.0" y="1389.2" font-size="18.90" fill="#e8e8e8" text-anchor="middle">31</text>
<line x1="3.00" y1="1422.70" x2="41.00" y2="1422.70" stroke="#383838" stroke-width="2"/>
<text x="23.0" y="1417.1" font-size="18.90" fill="#e8e8e8" text-anchor="middle">32</text>
<line x1="3.00" y1="1450.55" x2="41.00" y2="1450.55" stroke="#383838" stroke-width="2"/>
<text x="23.0" y="1444.9" font-size="18.90" fill="#e8e8e8" text-anchor="middle">33</text>
<line x1="3.00" y1="1478.40" x2="41.00" y2="1478.40" stroke="#383838" stroke-width="2"/>
<text x="23.0" y="1472.8" font-size="18.90" fill="#e8e8e8" text-anchor="middle">34</text>
<rect x="42.00" y="981.00" width="1151.00" height="46.40" fill="#c8c8c8"/>
<line x1="42.00" y1="517.40" x2="2362.00" y2="517.40" stroke="#606060" stroke-width="1.3"/>
<line x1="42.00" y1="563.40" x2="1193.00" y2="563.40" stroke="#c8c8c8" stroke-width="1.4"/>
<line x1="42.00" y1="609.80" x2="1193.00" y2="609.80" stroke="#c8c8c8" stroke-width="1.4"/>
<line x1="42.00" y1="656.20" x2="1193.00" y2="656.20" stroke="#c8c8c8" stroke-width="1.4"/>
<line x1="42.00" y1="702.60" x2="1193.00" y2="702.60" stroke="#c8c8c8" stroke-width="1.4"/>
<line x1="42.00" y1="749.00" x2="1193.00" y2="749.00" stroke="#c8c8c8" stroke-width="1.4"/>
<line x1="42.00" y1="795.40" x2="1193.00" y2="795.40" stroke="#c8c8c8" stroke-width="1.4"/>
<line x1="42.00" y1="841.80" x2="1193.00" y2="841.80" stroke="#c8c8c8" stroke-width="1.4"/>
<line x1="42.00" y1="888.20" x2="1193.00" y2="888.20" stroke="#c8c8c8" stroke-width="1.4"/>
<line x1="42.00" y1="934.60" x2="1193.00" y2="934.60" stroke="#c8c8c8" stroke-width="1.4"/>
<line x1="42.00" y1="981.00" x2="1193.00" y2="981.00" stroke="#c8c8c8" stroke-width="1.4"/>
<line x1="435.00" y1="517.00" x2="435.00" y2="1027.40" stroke="#c8c8c8" stroke-width="1.4"/>
<line x1="829.00" y1="517.00" x2="829.00" y2="1027.40" stroke="#c8c8c8" stroke-width="1.4"/>
<line x1="1011.00" y1="517.00" x2="1011.00" y2="1027.40" stroke="#c8c8c8" stroke-width="1.4"/>
<line x1="1193.00" y1="517.00" x2="1193.00" y2="1027.40" stroke="#b8b8b8" stroke-width="1.4"/>
<text x="62.85" y="548.2" font-size="23.69" fill="#1a1a1a" textLength="218.62" lengthAdjust="spacingAndGlyphs" fill-opacity="0.85">Agree on Objectives</text>
<text x="454.65" y="548.2" font-size="23.69" fill="#1a1a1a" textLength="86.51" lengthAdjust="spacingAndGlyphs" fill-opacity="0.85">Frank C.</text>
<text x="1031.99" y="548.2" font-size="23.69" fill="#168f16" textLength="109.87" lengthAdjust="spacingAndGlyphs" fill-opacity="0.92">COMPLETE</text>
<polygon points="918.60,536.50 919.95,540.54 924.21,540.58 920.79,543.11 922.07,547.17 918.60,544.70 915.13,547.17 916.41,543.11 912.99,540.58 917.25,540.54" fill="#111"/>
<text x="60.98" y="594.6" font-size="23.69" fill="#1a1a1a" textLength="191.57" lengthAdjust="spacingAndGlyphs" fill-opacity="0.85">Detailed Requests</text>
<text x="456.14" y="594.6" font-size="23.69" fill="#1a1a1a" textLength="90.18" lengthAdjust="spacingAndGlyphs" fill-opacity="0.85">Jacob S.</text>
<text x="1031.99" y="594.6" font-size="23.69" fill="#168f16" textLength="109.87" lengthAdjust="spacingAndGlyphs" fill-opacity="0.92">COMPLETE</text>
<text x="61.00" y="641.0" font-size="23.69" fill="#1a1a1a" textLength="204.74" lengthAdjust="spacingAndGlyphs" fill-opacity="0.85">Hardware Requests</text>
<text x="456.14" y="641.0" font-size="23.69" fill="#1a1a1a" textLength="90.18" lengthAdjust="spacingAndGlyphs" fill-opacity="0.85">Jacob S.</text>
<text x="1032.05" y="641.0" font-size="23.69" fill="#ff1f1f" textLength="98.80" lengthAdjust="spacingAndGlyphs" fill-opacity="0.92">OVERDUE</text>
<polygon points="918.60,629.30 919.95,633.34 924.21,633.38 920.79,635.91 922.07,639.97 918.60,637.50 915.13,639.97 916.41,635.91 912.99,633.38 917.25,633.34" fill="#111"/>
<text x="61.06" y="687.4" font-size="23.69" fill="#1a1a1a" textLength="202.30" lengthAdjust="spacingAndGlyphs" fill-opacity="0.85">Final Resource Plan</text>
<text x="456.14" y="687.4" font-size="23.69" fill="#1a1a1a" textLength="90.18" lengthAdjust="spacingAndGlyphs" fill-opacity="0.85">Jacob S.</text>
<text x="1031.20" y="687.4" font-size="23.69" fill="#ff6a1a" textLength="135.29" lengthAdjust="spacingAndGlyphs" fill-opacity="0.92">IN PROGRESS</text>
<text x="61.84" y="733.8" font-size="23.69" fill="#1a1a1a" textLength="79.16" lengthAdjust="spacingAndGlyphs" fill-opacity="0.85">Staffing</text>
<text x="456.46" y="733.8" font-size="23.69" fill="#1a1a1a" textLength="70.06" lengthAdjust="spacingAndGlyphs" fill-opacity="0.85">Alex B.</text>
<text x="1031.20" y="733.8" font-size="23.69" fill="#ff6a1a" textLength="135.29" lengthAdjust="spacingAndGlyphs" fill-opacity="0.92">IN PROGRESS</text>
<polygon points="918.60,722.10 919.95,726.14 924.21,726.18 920.79,728.71 922.07,732.77 918.60,730.30 915.13,732.77 916.41,728.71 912.99,726.18 917.25,726.14" fill="#111"/>
<text x="62.39" y="780.2" font-size="23.69" fill="#1a1a1a" textLength="198.63" lengthAdjust="spacingAndGlyphs" fill-opacity="0.85">Technical Requests</text>
<text x="454.65" y="780.2" font-size="23.69" fill="#1a1a1a" textLength="86.51" lengthAdjust="spacingAndGlyphs" fill-opacity="0.85">Frank C.</text>
<text x="1031.46" y="780.2" font-size="23.69" fill="#8c8c8c" textLength="132.74" lengthAdjust="spacingAndGlyphs" fill-opacity="0.92">NOT STARTED</text>
<text x="62.40" y="826.6" font-size="23.69" fill="#1a1a1a" textLength="72.32" lengthAdjust="spacingAndGlyphs" fill-opacity="0.85">Testing</text>
<text x="454.59" y="826.6" font-size="23.69" fill="#1a1a1a" textLength="120.64" lengthAdjust="spacingAndGlyphs" fill-opacity="0.85">Kennedy K.</text>
<text x="1031.46" y="826.6" font-size="23.69" fill="#8c8c8c" textLength="132.74" lengthAdjust="spacingAndGlyphs" fill-opacity="0.92">NOT STARTED</text>
<polygon points="918.60,814.90 919.95,818.94 924.21,818.98 920.79,821.51 922.07,825.57 918.60,823.10 915.13,825.57 916.41,821.51 912.99,818.98 917.25,818.94" fill="#111"/>
<text x="60.85" y="873.0" font-size="23.69" fill="#1a1a1a" textLength="165.46" lengthAdjust="spacingAndGlyphs" fill-opacity="0.85">Dev. Complete</text>
<text x="456.14" y="873.0" font-size="23.69" fill="#1a1a1a" textLength="90.18" lengthAdjust="spacingAndGlyphs" fill-opacity="0.85">Jacob S.</text>
<text x="1031.46" y="873.0" font-size="23.69" fill="#8c8c8c" textLength="132.74" lengthAdjust="spacingAndGlyphs" fill-opacity="0.92">NOT STARTED</text>
<polygon points="918.60,861.30 919.95,865.34 924.21,865.38 920.79,867.91 922.07,871.97 918.60,869.50 915.13,871.97 916.41,867.91 912.99,865.38 917.25,865.34" fill="#111"/>
<text x="60.90" y="919.4" font-size="23.69" fill="#1a1a1a" textLength="256.98" lengthAdjust="spacingAndGlyphs" fill-opacity="0.85">Hardware Configuration</text>
<text x="456.46" y="919.4" font-size="23.69" fill="#1a1a1a" textLength="70.06" lengthAdjust="spacingAndGlyphs" fill-opacity="0.85">Alex B.</text>
<text x="1031.46" y="919.4" font-size="23.69" fill="#8c8c8c" textLength="132.74" lengthAdjust="spacingAndGlyphs" fill-opacity="0.92">NOT STARTED</text>
<text x="61.90" y="965.8" font-size="23.69" fill="#1a1a1a" textLength="152.13" lengthAdjust="spacingAndGlyphs" fill-opacity="0.85">System Testing</text>
<text x="454.59" y="965.8" font-size="23.69" fill="#1a1a1a" textLength="120.64" lengthAdjust="spacingAndGlyphs" fill-opacity="0.85">Kennedy K.</text>
<text x="1031.46" y="965.8" font-size="23.69" fill="#8c8c8c" textLength="132.74" lengthAdjust="spacingAndGlyphs" fill-opacity="0.92">NOT STARTED</text>
<polygon points="918.60,954.10 919.95,958.14 924.21,958.18 920.79,960.71 922.07,964.77 918.60,962.30 915.13,964.77 916.41,960.71 912.99,958.18 917.25,958.14" fill="#111"/>
<text x="61.04" y="1012.2" font-size="23.26" fill="#111" font-weight="bold" textLength="77.82" lengthAdjust="spacingAndGlyphs">Launch</text>
<line x1="1230.50" y1="517.00" x2="1230.50" y2="1028.50" stroke="#c0c0c0" stroke-width="1.4"/>
<line x1="1230.50" y1="1028.50" x2="2362.00" y2="1028.50" stroke="#c0c0c0" stroke-width="1.4"/>
<line x1="1407.50" y1="517.00" x2="1407.50" y2="1011.50" stroke="#7a7a7a" stroke-width="1.4"/>
<text x="1246.27" y="548.2" font-size="18.31" fill="#111" textLength="147.84" lengthAdjust="spacingAndGlyphs">Agree on objectives</text>
<line x1="1402.00" y1="541.50" x2="1407.00" y2="541.50" stroke="#888" stroke-width="1.2"/>
<rect x="1409.00" y="534.50" width="326.00" height="17.50" fill="#a6a6a6"/>
<text x="1285.61" y="592.9" font-size="18.31" fill="#111" textLength="111.14" lengthAdjust="spacingAndGlyphs">Detailed Reqs.</text>
<line x1="1402.00" y1="586.20" x2="1407.00" y2="586.20" stroke="#888" stroke-width="1.2"/>
<rect x="1409.00" y="579.20" width="392.00" height="17.50" fill="#a6a6a6"/>
<text x="1273.81" y="637.6" font-size="18.31" fill="#111" textLength="122.33" lengthAdjust="spacingAndGlyphs">Hardward Reqs.</text>
<line x1="1402.00" y1="630.90" x2="1407.00" y2="630.90" stroke="#888" stroke-width="1.2"/>
<rect x="1409.00" y="623.90" width="425.00" height="17.50" fill="#a6a6a6"/>
<text x="1245.94" y="682.3" font-size="18.31" fill="#111" textLength="149.74" lengthAdjust="spacingAndGlyphs">Final Resource Plan</text>
<line x1="1402.00" y1="675.60" x2="1407.00" y2="675.60" stroke="#888" stroke-width="1.2"/>
<rect x="1409.00" y="668.60" width="457.30" height="17.50" fill="#a6a6a6"/>
<text x="1337.20" y="727.0" font-size="18.31" fill="#111" textLength="59.94" lengthAdjust="spacingAndGlyphs">Staffing</text>
<line x1="1402.00" y1="720.30" x2="1407.00" y2="720.30" stroke="#888" stroke-width="1.2"/>
<rect x="1409.00" y="713.30" width="539.00" height="17.50" fill="#a6a6a6"/>
<text x="1276.83" y="771.7" font-size="18.31" fill="#111" textLength="119.70" lengthAdjust="spacingAndGlyphs">Techincal Reqs.</text>
<line x1="1402.00" y1="765.00" x2="1407.00" y2="765.00" stroke="#888" stroke-width="1.2"/>
<rect x="1409.00" y="758.00" width="556.00" height="17.50" fill="#a6a6a6"/>
<text x="1339.40" y="816.4" font-size="18.31" fill="#111" textLength="57.73" lengthAdjust="spacingAndGlyphs">Testing</text>
<line x1="1402.00" y1="809.70" x2="1407.00" y2="809.70" stroke="#888" stroke-width="1.2"/>
<rect x="1409.00" y="802.70" width="671.00" height="17.50" fill="#a6a6a6"/>
<text x="1284.02" y="861.1" font-size="18.31" fill="#111" textLength="111.33" lengthAdjust="spacingAndGlyphs">Dev. Complete</text>
<line x1="1402.00" y1="854.40" x2="1407.00" y2="854.40" stroke="#888" stroke-width="1.2"/>
<rect x="1409.00" y="847.40" width="801.50" height="17.50" fill="#a6a6a6"/>
<text x="1262.91" y="905.8" font-size="18.31" fill="#111" textLength="132.14" lengthAdjust="spacingAndGlyphs">Hardware Config.</text>
<line x1="1402.00" y1="899.10" x2="1407.00" y2="899.10" stroke="#888" stroke-width="1.2"/>
<rect x="1409.00" y="892.10" width="851.00" height="17.50" fill="#a6a6a6"/>
<text x="1278.12" y="950.5" font-size="18.31" fill="#111" textLength="119.00" lengthAdjust="spacingAndGlyphs">System Testing</text>
<line x1="1402.00" y1="943.80" x2="1407.00" y2="943.80" stroke="#888" stroke-width="1.2"/>
<rect x="1409.00" y="936.80" width="867.00" height="17.50" fill="#a6a6a6"/>
<text x="1339.38" y="995.2" font-size="18.31" fill="#111" textLength="56.74" lengthAdjust="spacingAndGlyphs">Launch</text>
<line x1="1402.00" y1="988.50" x2="1407.00" y2="988.50" stroke="#888" stroke-width="1.2"/>
<rect x="1409.00" y="981.50" width="917.00" height="17.50" fill="#a6a6a6"/>
<line x1="1456.00" y1="517.00" x2="1456.00" y2="1011.50" stroke="#5a5a5a" stroke-width="1.7"/>
<line x1="1538.00" y1="517.00" x2="1538.00" y2="1011.50" stroke="#8a8a8a" stroke-width="1.3"/>
<line x1="1620.00" y1="517.00" x2="1620.00" y2="1011.50" stroke="#5a5a5a" stroke-width="1.7"/>
<line x1="1702.00" y1="517.00" x2="1702.00" y2="1011.50" stroke="#8a8a8a" stroke-width="1.3"/>
<line x1="1784.00" y1="517.00" x2="1784.00" y2="1011.50" stroke="#5a5a5a" stroke-width="1.7"/>
<line x1="1866.00" y1="517.00" x2="1866.00" y2="1011.50" stroke="#8a8a8a" stroke-width="1.3"/>
<line x1="1948.00" y1="517.00" x2="1948.00" y2="1011.50" stroke="#5a5a5a" stroke-width="1.7"/>
<line x1="2030.00" y1="517.00" x2="2030.00" y2="1011.50" stroke="#8a8a8a" stroke-width="1.3"/>
<line x1="2112.00" y1="517.00" x2="2112.00" y2="1011.50" stroke="#5a5a5a" stroke-width="1.7"/>
<line x1="2194.00" y1="517.00" x2="2194.00" y2="1011.50" stroke="#8a8a8a" stroke-width="1.3"/>
<line x1="2276.00" y1="517.00" x2="2276.00" y2="1011.50" stroke="#5a5a5a" stroke-width="1.7"/>
<line x1="2358.00" y1="517.00" x2="2358.00" y2="1011.50" stroke="#8a8a8a" stroke-width="1.3"/>
<rect x="1737.00" y="534.00" width="66.00" height="18.00" fill="#b4b4b4"/>
<rect x="1735.00" y="532.00" width="66.00" height="18.00" fill="url(#gblue)"/>
<rect x="1803.00" y="578.70" width="82.00" height="18.00" fill="#b4b4b4"/>
<rect x="1801.00" y="576.70" width="82.00" height="18.00" fill="url(#ggreen)"/>
<rect x="1836.00" y="623.40" width="32.30" height="18.00" fill="#b4b4b4"/>
<rect x="1834.00" y="621.40" width="32.30" height="18.00" fill="url(#ggreen)"/>
<rect x="1868.30" y="668.10" width="65.70" height="18.00" fill="#b4b4b4"/>
<rect x="1866.30" y="666.10" width="65.70" height="18.00" fill="url(#ggreen)"/>
<rect x="1950.00" y="712.80" width="17.00" height="18.00" fill="#b4b4b4"/>
<rect x="1948.00" y="710.80" width="17.00" height="18.00" fill="url(#ggreen)"/>
<rect x="1967.00" y="757.50" width="65.00" height="18.00" fill="#b4b4b4"/>
<rect x="1965.00" y="755.50" width="65.00" height="18.00" fill="url(#ggreen)"/>
<rect x="2082.00" y="802.20" width="130.50" height="18.00" fill="#b4b4b4"/>
<rect x="2080.00" y="800.20" width="130.50" height="18.00" fill="url(#ggreen)"/>
<rect x="2212.50" y="846.90" width="49.50" height="18.00" fill="#b4b4b4"/>
<rect x="2210.50" y="844.90" width="49.50" height="18.00" fill="url(#ggreen)"/>
<rect x="2262.00" y="891.60" width="33.00" height="18.00" fill="#b4b4b4"/>
<rect x="2260.00" y="889.60" width="33.00" height="18.00" fill="url(#gorange)"/>
<rect x="2278.00" y="936.30" width="50.00" height="18.00" fill="#b4b4b4"/>
<rect x="2276.00" y="934.30" width="50.00" height="18.00" fill="url(#gorange)"/>
<rect x="2328.00" y="981.00" width="16.00" height="18.00" fill="#b4b4b4"/>
<rect x="2326.00" y="979.00" width="16.00" height="18.00" fill="url(#gorange)"/>
<path d="M48.5,1056 L48.5,1452.5 L1007.5,1452.5 L1007.5,1056" fill="none" stroke="#c8c8c8" stroke-width="1.4"/>
<text x="356.49" y="1101.8" font-size="38.52" fill="#000" font-weight="bold" textLength="341.01" lengthAdjust="spacingAndGlyphs">Overall Task Status</text>
<path d="M437.8,1283 L437.80,1123.80 A159.2,159.2 0 0 1 595.38,1305.66 Z" fill="url(#pg)" stroke="#ffffff" stroke-width="0.6"/>
<path d="M437.8,1283 L595.38,1305.66 A159.2,159.2 0 0 1 558.12,1387.25 Z" fill="url(#pr)" stroke="#ffffff" stroke-width="0.6"/>
<path d="M437.8,1283 L558.12,1387.25 A159.2,159.2 0 0 1 392.95,1435.75 Z" fill="url(#py)" stroke="#ffffff" stroke-width="0.6"/>
<path d="M437.8,1283 L392.95,1435.75 A159.2,159.2 0 0 1 437.80,1123.80 Z" fill="url(#pgr)" stroke="#ffffff" stroke-width="0.6"/>
<path d="M835.3,1253.9 L835.3,1230.3 A30.7,23.600000000000136 0 0 1 866,1253.9 Z" fill="url(#pg)"/>
<text x="870.82" y="1247.9" font-size="20.06" fill="#3a3a3a" textLength="91.33" lengthAdjust="spacingAndGlyphs">Complete</text>
<path d="M835.3,1281.4 L835.3,1257.5 A30.7,23.90000000000009 0 0 1 866,1281.4 Z" fill="url(#pr)"/>
<text x="870.84" y="1274.9" font-size="20.06" fill="#3a3a3a" textLength="85.55" lengthAdjust="spacingAndGlyphs">Overdue</text>
<path d="M835.3,1308.6 L835.3,1284.7 A30.7,23.899999999999864 0 0 1 866,1308.6 Z" fill="url(#py)"/>
<text x="870.99" y="1302.0" font-size="20.06" fill="#3a3a3a" textLength="98.02" lengthAdjust="spacingAndGlyphs">In progress</text>
<path d="M835.3,1335.5 L835.3,1312 A30.7,23.5 0 0 1 866,1335.5 Z" fill="url(#pgr)"/>
<text x="871.09" y="1328.9" font-size="20.06" fill="#3a3a3a" textLength="105.45" lengthAdjust="spacingAndGlyphs">Not Started</text>
<rect x="1039.50" y="1051.50" width="802.00" height="401.00" fill="none" stroke="#c8c8c8" stroke-width="1.4"/>
<text x="1374.46" y="1097.0" font-size="39.24" fill="#000" font-weight="bold" textLength="131.01" lengthAdjust="spacingAndGlyphs">Budget</text>
<text x="1097.41" y="1438.2" font-size="18.17" fill="#111" textLength="50.99" lengthAdjust="spacingAndGlyphs">20,000</text>
<line x1="1123.00" y1="1414.00" x2="1123.00" y2="1419.00" stroke="#8a8a8a" stroke-width="1.2"/>
<line x1="1223.10" y1="1175.50" x2="1223.10" y2="1414.00" stroke="#8a8a8a" stroke-width="1.4"/>
<text x="1197.72" y="1438.2" font-size="18.17" fill="#111" textLength="50.78" lengthAdjust="spacingAndGlyphs">30,000</text>
<line x1="1223.10" y1="1414.00" x2="1223.10" y2="1419.00" stroke="#8a8a8a" stroke-width="1.2"/>
<line x1="1323.20" y1="1175.50" x2="1323.20" y2="1414.00" stroke="#8a8a8a" stroke-width="1.4"/>
<text x="1298.07" y="1438.2" font-size="18.17" fill="#111" textLength="50.52" lengthAdjust="spacingAndGlyphs">40,000</text>
<line x1="1323.20" y1="1414.00" x2="1323.20" y2="1419.00" stroke="#8a8a8a" stroke-width="1.2"/>
<line x1="1423.30" y1="1175.50" x2="1423.30" y2="1414.00" stroke="#8a8a8a" stroke-width="1.4"/>
<text x="1397.88" y="1438.2" font-size="18.17" fill="#111" textLength="50.81" lengthAdjust="spacingAndGlyphs">50,000</text>
<line x1="1423.30" y1="1414.00" x2="1423.30" y2="1419.00" stroke="#8a8a8a" stroke-width="1.2"/>
<line x1="1523.40" y1="1175.50" x2="1523.40" y2="1414.00" stroke="#8a8a8a" stroke-width="1.4"/>
<text x="1497.80" y="1438.2" font-size="18.17" fill="#111" textLength="51.00" lengthAdjust="spacingAndGlyphs">60,000</text>
<line x1="1523.40" y1="1414.00" x2="1523.40" y2="1419.00" stroke="#8a8a8a" stroke-width="1.2"/>
<line x1="1623.50" y1="1175.50" x2="1623.50" y2="1414.00" stroke="#8a8a8a" stroke-width="1.4"/>
<text x="1597.90" y="1438.2" font-size="18.17" fill="#111" textLength="51.01" lengthAdjust="spacingAndGlyphs">70,000</text>
<line x1="1623.50" y1="1414.00" x2="1623.50" y2="1419.00" stroke="#8a8a8a" stroke-width="1.2"/>
<line x1="1723.60" y1="1175.50" x2="1723.60" y2="1414.00" stroke="#777" stroke-width="2"/>
<text x="1698.13" y="1438.2" font-size="18.17" fill="#111" textLength="50.87" lengthAdjust="spacingAndGlyphs">80,000</text>
<line x1="1723.60" y1="1414.00" x2="1723.60" y2="1419.00" stroke="#8a8a8a" stroke-width="1.2"/>
<line x1="1823.70" y1="1175.50" x2="1823.70" y2="1414.00" stroke="#777" stroke-width="2"/>
<text x="1777.47" y="1438.2" font-size="18.17" fill="#111" textLength="50.93" lengthAdjust="spacingAndGlyphs">90,000</text>
<line x1="1823.70" y1="1414.00" x2="1823.70" y2="1419.00" stroke="#8a8a8a" stroke-width="1.2"/>
<line x1="1123.00" y1="1414.00" x2="1824.00" y2="1414.00" stroke="#8a8a8a" stroke-width="1.6"/>
<rect x="1125.00" y="1214.50" width="301.00" height="47.00" fill="#c8c8c8"/>
<rect x="1123.00" y="1212.50" width="301.00" height="47.00" fill="url(#bact)"/>
<rect x="1125.00" y="1333.00" width="603.00" height="47.00" fill="#c8c8c8"/>
<rect x="1123.00" y="1331.00" width="603.00" height="46.50" fill="url(#bpl)"/>
<text x="1064.47" y="1241.8" font-size="18.90" fill="#111" textLength="47.68" lengthAdjust="spacingAndGlyphs">Actual</text>
<text x="1050.01" y="1361.0" font-size="18.90" fill="#111" textLength="62.08" lengthAdjust="spacingAndGlyphs">Planned</text>
<line x1="1117.00" y1="1354.50" x2="1123.00" y2="1354.50" stroke="#8a8a8a" stroke-width="1.2"/>
<path d="M2362,1051.5 L1873.5,1051.5 L1873.5,1452.5 L2362,1452.5" fill="none" stroke="#c8c8c8" stroke-width="1.4"/>
<text x="2053.04" y="1096.8" font-size="39.24" fill="#000" font-weight="bold" textLength="261.12" lengthAdjust="spacingAndGlyphs">Pending Items</text>
<line x1="1905.50" y1="1124.50" x2="1905.50" y2="1414.00" stroke="#8a8a8a" stroke-width="1.6"/>
<line x1="1897.00" y1="1413.60" x2="2362.00" y2="1413.60" stroke="#8a8a8a" stroke-width="1.6"/>
<text x="1893.6" y="1419.8" font-size="18.17" fill="#111" text-anchor="end">0</text>
<line x1="1897.00" y1="1361.00" x2="2362.00" y2="1361.00" stroke="#8a8a8a" stroke-width="1.6"/>
<text x="1893.6" y="1367.2" font-size="18.17" fill="#111" text-anchor="end">1</text>
<line x1="1897.00" y1="1308.40" x2="2362.00" y2="1308.40" stroke="#8a8a8a" stroke-width="1.3"/>
<text x="1893.6" y="1314.6" font-size="18.17" fill="#111" text-anchor="end">2</text>
<line x1="1897.00" y1="1255.80" x2="2362.00" y2="1255.80" stroke="#8a8a8a" stroke-width="1.3"/>
<text x="1893.6" y="1262.0" font-size="18.17" fill="#111" text-anchor="end">3</text>
<line x1="1897.00" y1="1203.20" x2="2362.00" y2="1203.20" stroke="#8a8a8a" stroke-width="1.3"/>
<text x="1893.6" y="1209.4" font-size="18.17" fill="#111" text-anchor="end">4</text>
<line x1="1897.00" y1="1150.60" x2="2362.00" y2="1150.60" stroke="#8a8a8a" stroke-width="1.6"/>
<text x="1893.6" y="1156.8" font-size="18.17" fill="#111" text-anchor="end">5</text>
<rect x="1962.40" y="1150.60" width="76.30" height="263.00" fill="#2e75b6"/>
<line x1="2039.50" y1="1152.00" x2="2039.50" y2="1413.00" stroke="#b0b0b0" stroke-width="1.5"/>
<rect x="2153.30" y="1308.30" width="75.60" height="105.30" fill="#548235"/>
<line x1="2229.70" y1="1310.00" x2="2229.70" y2="1413.00" stroke="#b0b0b0" stroke-width="1.5"/>
<rect x="2344.00" y="1203.40" width="18.00" height="210.00" fill="#7f7f7f"/>
<line x1="2000.50" y1="1414.00" x2="2000.50" y2="1419.00" stroke="#8a8a8a" stroke-width="1.2"/>
<line x1="2191.00" y1="1414.00" x2="2191.00" y2="1419.00" stroke="#8a8a8a" stroke-width="1.2"/>
<text x="1963.10" y="1438.5" font-size="18.90" fill="#111" textLength="74.02" lengthAdjust="spacingAndGlyphs">Decisions</text>
<text x="2163.47" y="1438.5" font-size="18.90" fill="#111" textLength="55.65" lengthAdjust="spacingAndGlyphs">Actions</text>
<text x="2313.67" y="1438.5" font-size="18.90" fill="#111" textLength="73.60" lengthAdjust="spacingAndGlyphs">Changes</text>
<rect x="2362.00" y="466.50" width="32.50" height="994.00" fill="#1f1f1f"/>
<rect x="2376.50" y="633.00" width="5.00" height="470.00" fill="#8a8a8a" rx="2.5"/>
<rect x="3.00" y="1460.50" width="2391.50" height="67.50" fill="#202020"/>
<rect x="13.00" y="1470.50" width="191.00" height="50.00" fill="#2b2b2b" rx="10" stroke="#363636" stroke-width="1.5"/>
<line x1="25.00" y1="1487.00" x2="25.00" y2="1503.00" stroke="#dcdcdc" stroke-width="1.8"/>
<path d="M38,1486.5 L29.5,1495 L38,1503.5 M46.5,1486.5 L38,1495 L46.5,1503.5" fill="none" stroke="#dcdcdc" stroke-width="1.8"/>
<path d="M89,1486 L80,1495 L89,1504" fill="none" stroke="#dcdcdc" stroke-width="1.8"/>
<path d="M127,1486 L136,1495 L127,1504" fill="none" stroke="#dcdcdc" stroke-width="1.8"/>
<path d="M169.5,1486.5 L178,1495 L169.5,1503.5 M178,1486.5 L186.5,1495 L178,1503.5" fill="none" stroke="#dcdcdc" stroke-width="1.8"/>
<line x1="191.00" y1="1487.00" x2="191.00" y2="1503.00" stroke="#dcdcdc" stroke-width="1.8"/>
<path d="M206,1461 L585,1461 Q593,1461 593,1469 L593,1508 Q593,1519.5 581,1519.5 L224,1519.5 Q212,1519.5 212,1508 L212,1469 Q212,1461 206,1461 Z" fill="#383838"/>
<text x="229.53" y="1503.9" font-size="24.13" fill="#ffffff" textLength="346.02" lengthAdjust="spacingAndGlyphs">Project Management Dashboard</text>
<rect x="603.50" y="1461.00" width="100.00" height="58.50" fill="#2a2a2a" rx="10"/>
<text x="620.77" y="1503.9" font-size="24.13" fill="#ffffff" textLength="64.62" lengthAdjust="spacingAndGlyphs">Notes</text>
<rect x="714.00" y="1461.00" width="166.00" height="58.50" fill="#2a2a2a" rx="10"/>
<text x="731.92" y="1503.9" font-size="24.13" fill="#ffffff" textLength="129.66" lengthAdjust="spacingAndGlyphs">-Disclaimer-</text>
<path d="M910.5,1495 L930,1495 M920.25,1485.5 L920.25,1504.5" fill="none" stroke="#ffffff" stroke-width="2"/>
<rect x="1419.00" y="1461.00" width="8.00" height="66.50" fill="#383838"/>
<rect x="1421.8" y="1486" width="2.4" height="4" rx="1.2" fill="#8a8a8a"/>
<rect x="1421.8" y="1492" width="2.4" height="4" rx="1.2" fill="#8a8a8a"/>
<rect x="1421.8" y="1498" width="2.4" height="4" rx="1.2" fill="#8a8a8a"/>
<rect x="1486.00" y="1490.80" width="255.00" height="6.20" fill="#8a8a8a" rx="3.1"/>
<rect x="3.00" y="1527.80" width="2394.00" height="4.20" fill="#3c3c3c"/>
<text x="18.59" y="1574.8" font-size="24.42" fill="#ffffff" textLength="875.56" lengthAdjust="spacingAndGlyphs">C:\Users\SharpenedProductions\Documents\Files\Spreadsheet\Annual Budget.xlsx</text>
<rect x="1998.00" y="1563.00" width="24.00" height="4.00" fill="#8a8a8a" rx="2"/>
<rect x="2041.00" y="1561.00" width="182.00" height="8.00" fill="#8a8a8a" rx="4"/>
<rect x="2041.00" y="1561.00" width="75.00" height="8.00" fill="#4cc2ff" rx="4"/>
<circle cx="2116" cy="1565" r="20.5" fill="#2c2c2c" stroke="#454545" stroke-width="2"/>
<circle cx="2116" cy="1565" r="14" fill="#4cc2ff"/>
<rect x="2242.00" y="1563.00" width="24.00" height="4.00" fill="#8a8a8a" rx="2"/>
<rect x="2252.00" y="1553.00" width="4.00" height="24.00" fill="#8a8a8a" rx="2"/>
<text x="2320.38" y="1574.5" font-size="23.40" fill="#ffffff" textLength="47.06" lengthAdjust="spacingAndGlyphs">80%</text>
<rect x="1" y="1" width="2398" height="1598" rx="13" fill="none" stroke="#c4c4c4" stroke-width="2"/>
<path d="M0,0 L14,0 A13,13 0 0 0 0,14 Z M2400,0 L2386,0 A13,13 0 0 1 2400,14 Z M0,1600 L0,1586 A13,13 0 0 0 14,1600 Z M2400,1600 L2386,1600 A13,13 0 0 0 2400,1586 Z" fill="#ffffff"/>
</svg>
</body></html>
